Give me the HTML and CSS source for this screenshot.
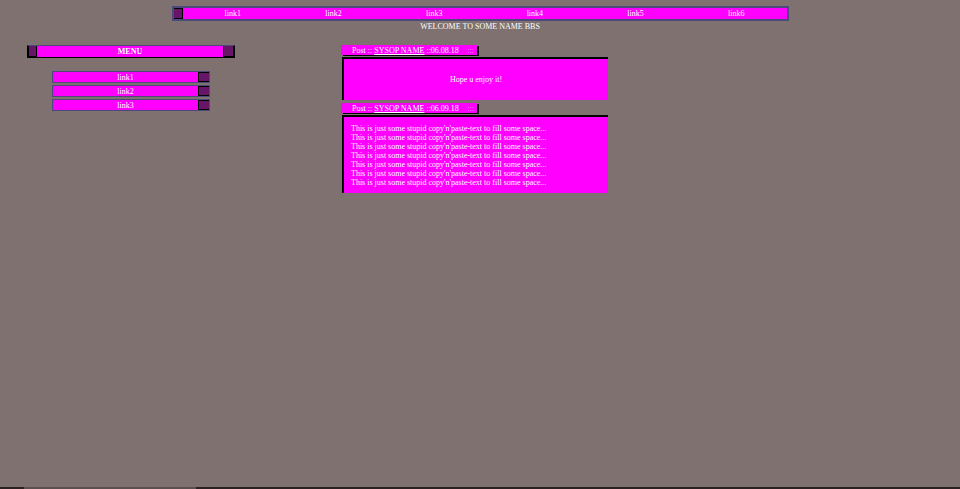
FILE: index.html
```html
<!DOCTYPE html>
<html>
<head>
<meta charset="utf-8">
<title>SOME NAME BBS</title>
<link rel="stylesheet" href="styles.css">
</head>
<body>
<div class="nav">
  <span class="corner"></span>
  <a href="#">link1</a>
  <a href="#">link2</a>
  <a href="#">link3</a>
  <a href="#">link4</a>
  <a href="#">link5</a>
  <a href="#">link6</a>
</div>
<div class="welcome">WELCOME TO SOME NAME BBS</div>
<div class="main">
  <div class="side">
    <div class="menu"><span class="corner"></span><b class="menu-title">MENU</b><span class="corner"></span></div>
    <div class="links">
      <div class="link"><a class="label" href="#">link1</a><span class="corner"></span></div>
      <div class="link"><a class="label" href="#">link2</a><span class="corner"></span></div>
      <div class="link"><a class="label" href="#">link3</a><span class="corner"></span></div>
    </div>
  </div>
  <div class="posts">
    <div class="post-head"><span>Post :: <a href="#">SYSOP NAME</a> ::06.08.18</span><span class="dots">:::</span></div>
    <div class="post-body centered">Hope u enjoy it!</div>
    <div class="post-head second"><span>Post :: <a href="#">SYSOP NAME</a> ::06.09.18</span><span class="dots">:::</span></div>
    <div class="post-body text">
      This is just some stupid copy'n'paste-text to fill some space...<br>
      This is just some stupid copy'n'paste-text to fill some space...<br>
      This is just some stupid copy'n'paste-text to fill some space...<br>
      This is just some stupid copy'n'paste-text to fill some space...<br>
      This is just some stupid copy'n'paste-text to fill some space...<br>
      This is just some stupid copy'n'paste-text to fill some space...<br>
      This is just some stupid copy'n'paste-text to fill some space...
    </div>
  </div>
</div>
<div class="scrollbar"><span class="thumb"></span></div>
</body>
</html>
```
FILE: styles.css
```css
body {
  margin: 0;
  background: #7e716f;
  font-family: "Liberation Serif", "Times New Roman", serif;
  font-size: 8px;
  color: #fff;
}
a { color: #fff; }

.corner {
  display: block;
  box-sizing: border-box;
  border: 1px solid #000;
  background:
    radial-gradient(circle, #c030c0 0.6px, transparent 0.8px) 0 0 / 2px 2px,
    #1a001a;
}

.nav {
  box-sizing: border-box;
  width: 617px;
  height: 15px;
  margin: 6px auto 0;
  border: 2px solid #4b4a7b;
  background: #f0f;
  display: flex;
  align-items: stretch;
}
.nav .corner { width: 9px; border-width: 1px 1px 1px 0; }
.nav a {
  flex: 1;
  text-align: center;
  text-decoration: none;
  line-height: 11px;
}

.welcome {
  text-align: center;
  line-height: 10px;
  margin-top: 1px;
}

.main {
  display: flex;
  align-items: flex-start;
  margin-top: 13px;
  padding-left: 27px;
}

.side { width: 208px; margin-right: 106px; }
.menu {
  box-sizing: border-box;
  height: 13px;
  border: 1px solid #000;
  border-top-color: #4b4a7b;
  background: #f0f;
  display: flex;
}
.menu .corner { width: 9px; border-width: 0 1px 1px 1px; }
.menu .corner:last-child { width: 11px; }
.menu-title { flex: 1; text-align: center; line-height: 12px; }

.links { width: 158px; margin: 13px auto 0; }
.link {
  box-sizing: border-box;
  height: 12px;
  margin-bottom: 2px;
  border: 1px solid #4b4a7b;
  background: #f0f;
  display: flex;
}
.link .label {
  flex: 1;
  text-align: center;
  text-decoration: none;
  line-height: 11px;
}
.link .corner { width: 11px; border-width: 1px 0 1px 1px; }

.posts { width: 268px; }
.post-head {
  box-sizing: border-box;
  width: 136px;
  height: 10px;
  line-height: 11px;
  padding: 0 3px 0 11px;
  background: #f0f;
  box-shadow: 2px 1px 0 #000;
  display: flex;
  justify-content: space-between;
}
.post-head.second { margin-top: 3px; }
.dots { color: #e6a0e6; }

.post-body {
  box-sizing: border-box;
  width: 266px;
  margin: 2px 0 0 1px;
  border-top: 2px solid #000;
  border-left: 2px solid #000;
  background: #f0f;
}
.post-body.centered {
  height: 43px;
  display: flex;
  align-items: center;
  justify-content: center;
}
.post-body.text {
  padding: 7px 0 6px 7px;
  line-height: 9px;
}

.scrollbar {
  position: fixed;
  left: 0;
  right: 0;
  bottom: 0;
  height: 2px;
  background: #2a2222;
}
.scrollbar .thumb {
  position: absolute;
  left: 24px;
  width: 172px;
  top: 0;
  bottom: 0;
  background: #5a5050;
}
```
